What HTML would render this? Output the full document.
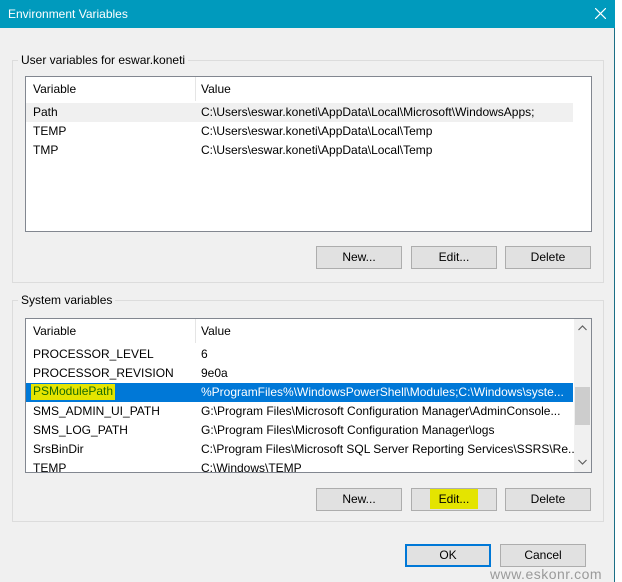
<!DOCTYPE html>
<html><head><style>
*{margin:0;padding:0;box-sizing:border-box}
body{width:622px;height:582px;background:#fff;font-family:"Liberation Sans",sans-serif;font-size:12px;color:#000;position:relative;overflow:hidden}
.win{position:absolute;left:0;top:0;width:615px;height:582px;background:#f0f0f0;border-right:1px solid #1b6f86}
.title{position:absolute;left:0;top:0;width:615px;height:28px;background:#009abd;color:#fff;font-size:12px}
.title span{position:absolute;left:8px;top:7px}
.grp{position:absolute;border:1px solid #dcdcdc}
.lbl{position:absolute;background:#f0f0f0;padding:0 3px}
.list{position:absolute;background:#fff;border:1px solid #828790;overflow:hidden}
.hdr{position:absolute;top:0;height:24px;left:0;right:0}
.hdr span{position:absolute;top:5px}
.sep{position:absolute;left:169px;top:0;width:1px;height:24px;background:#e5e5e5}
.row{position:absolute;left:0;height:19px;width:547px}
.row span{position:absolute;top:2px;white-space:nowrap}
.c1{left:7px}.c2{left:175px}
.btn{position:absolute;width:86px;height:23px;background:#e1e1e1;border:1px solid #adadad;text-align:center;line-height:21px}
</style></head><body>
<div class="win">
<div class="title"><span>Environment Variables</span>
<svg style="position:absolute;left:595px;top:8px" width="11" height="11"><path d="M0 0L11 11M11 0L0 11" stroke="#fff" stroke-width="1.2"/></svg></div>

<div class="grp" style="left:12px;top:60px;width:592px;height:223px"></div>
<div class="lbl" style="left:18px;top:53px">User variables for eswar.koneti</div>
<div class="list" style="left:25px;top:76px;width:567px;height:156px">
<div class="hdr"><span style="left:7px">Variable</span><div class="sep"></div><span style="left:175px">Value</span></div>
<div class="row" style="top:26px;background:#f0f0f0"><span class="c1">Path</span><span class="c2">C:\Users\eswar.koneti\AppData\Local\Microsoft\WindowsApps;</span></div>
<div class="row" style="top:45px"><span class="c1">TEMP</span><span class="c2">C:\Users\eswar.koneti\AppData\Local\Temp</span></div>
<div class="row" style="top:64px"><span class="c1">TMP</span><span class="c2">C:\Users\eswar.koneti\AppData\Local\Temp</span></div>
</div>
<div class="btn" style="left:316px;top:246px">New...</div>
<div class="btn" style="left:411px;top:246px">Edit...</div>
<div class="btn" style="left:505px;top:246px">Delete</div>

<div class="grp" style="left:12px;top:300px;width:592px;height:222px"></div>
<div class="lbl" style="left:18px;top:293px">System variables</div>
<div class="list" style="left:25px;top:318px;width:567px;height:155px">
<div class="hdr"><span style="left:7px">Variable</span><div class="sep"></div><span style="left:175px">Value</span></div>
<div class="row" style="top:26px"><span class="c1">PROCESSOR_LEVEL</span><span class="c2">6</span></div>
<div class="row" style="top:45px"><span class="c1">PROCESSOR_REVISION</span><span class="c2">9e0a</span></div>
<div class="row" style="top:64px;background:#0078d7;color:#fff"><span class="c1" style="left:5px;padding:0 2px;background:#e4e400;color:#1a6a00;top:1px;height:16px">PSModulePath</span><span class="c2">%ProgramFiles%\WindowsPowerShell\Modules;C:\Windows\syste...</span></div>
<div class="row" style="top:83px"><span class="c1">SMS_ADMIN_UI_PATH</span><span class="c2">G:\Program Files\Microsoft Configuration Manager\AdminConsole...</span></div>
<div class="row" style="top:102px"><span class="c1">SMS_LOG_PATH</span><span class="c2">G:\Program Files\Microsoft Configuration Manager\logs</span></div>
<div class="row" style="top:121px"><span class="c1">SrsBinDir</span><span class="c2">C:\Program Files\Microsoft SQL Server Reporting Services\SSRS\Re...</span></div>
<div class="row" style="top:140px"><span class="c1">TEMP</span><span class="c2">C:\Windows\TEMP</span></div>
<div style="position:absolute;left:548px;top:0;width:17px;height:153px;background:#f0f0f0">
<svg style="position:absolute;left:4px;top:6px" width="9" height="6"><path d="M0.5 5L4.5 1L8.5 5" stroke="#606060" fill="none" stroke-width="1.2"/></svg>
<div style="position:absolute;left:1px;top:68px;width:15px;height:38px;background:#cdcdcd"></div>
<svg style="position:absolute;left:4px;top:140px" width="9" height="6"><path d="M0.5 1L4.5 5L8.5 1" stroke="#606060" fill="none" stroke-width="1.2"/></svg>
</div>
</div>
<div class="btn" style="left:316px;top:488px">New...</div>
<div class="btn" style="left:411px;top:488px"><span style="background:#e4e400;padding:3px 9px">Edit...</span></div>
<div class="btn" style="left:505px;top:488px">Delete</div>

<div class="btn" style="left:405px;top:544px;border:2px solid #0078d7;line-height:19px">OK</div>
<div class="btn" style="left:500px;top:544px">Cancel</div>
</div>
<div style="position:absolute;left:490px;top:566px;font-size:14px;color:#9a9a9a;letter-spacing:0.5px">www.eskonr.com</div>
</body></html>
